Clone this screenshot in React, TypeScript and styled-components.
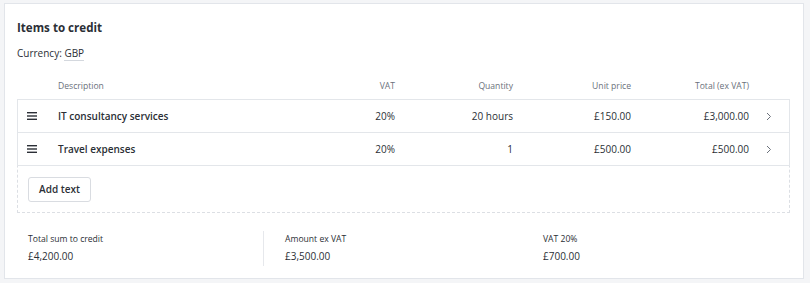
import React, { FC } from 'react';
import styled, { createGlobalStyle } from 'styled-components';

const GlobalStyle = createGlobalStyle`
    html, body {
        margin: 0;
        padding: 0;
        background: #f4f5f7;
        font-family: 'Open Sans', 'Liberation Sans', sans-serif;
        color: #2b2f36;
    }
`;

const Page = styled.div`
    padding: 3px 6px 5px 4px;
`;

const Card = styled.section`
    background: #ffffff;
    border: 1px solid #e2e5ea;
    padding: 14px 13px 12px 12px;
`;

const Title = styled.h2`
    margin: 0;
    font-size: 11.6px;
    font-weight: 700;
    line-height: 20px;
`;

const Currency = styled.div`
    margin-top: 7px;
    font-size: 10px;
    line-height: 16px;

    span {
        border-bottom: 1px solid #d4d8de;
    }
`;

const COLUMNS = '40px 219px 118px 118px 118px 118px 40px';

const HeaderRow = styled.div`
    margin-top: 11px;
    display: grid;
    grid-template-columns: ${COLUMNS};
    height: 27px;
    align-items: center;
    border-left: 1px solid transparent;
    border-right: 1px solid transparent;
    font-size: 8.6px;
    color: #6b717b;
`;

const Cell = styled.div<{ $right?: boolean }>`
    text-align: ${(p) => (p.$right ? 'right' : 'left')};
    white-space: nowrap;
`;

const LinesBox = styled.div`
    border: 1px dashed #dcdfe4;
    border-top: none;
`;

const Row = styled.div`
    display: grid;
    grid-template-columns: ${COLUMNS};
    align-items: center;
    height: 32px;
    margin: 0 -1px;
    border: 1px solid #e3e6ea;
    border-bottom: none;
    font-size: 10px;
    background: #fff;

    &:last-of-type {
        border-bottom: 1px solid #e3e6ea;
    }
`;

const Description = styled(Cell)`
    font-weight: 600;
`;

const Handle = styled.div`
    display: flex;
    align-items: center;
    padding-left: 9px;
`;

const Chevron = styled.div`
    display: flex;
    justify-content: center;
    align-items: center;
`;

const AddBar = styled.div`
    padding: 10px 10px 10px;
`;

const AddButton = styled.button`
    font-family: inherit;
    font-size: 10px;
    font-weight: 600;
    color: #2b2f36;
    background: #fff;
    border: 1px solid #d9dce1;
    border-radius: 3px;
    height: 25px;
    width: 63px;
    padding: 0;
`;

const Summary = styled.div`
    margin-top: 18px;
    display: grid;
    grid-template-columns: 247px 258px 1fr;
`;

const SummaryItem = styled.div<{ $divider?: boolean }>`
    padding-left: ${(p) => (p.$divider ? '11px' : '21px')};
    border-right: ${(p) => (p.$divider ? '1px solid #e6e8ec' : 'none')};
    height: 35px;
    display: flex;
    flex-direction: column;
    justify-content: center;
`;

const SummaryLabel = styled.div`
    font-size: 8.6px;
    line-height: 17px;
`;

const SummaryValue = styled.div`
    font-size: 10px;
    line-height: 17px;
`;

const HandleIcon: FC = () => (
    <svg width="10" height="8" viewBox="0 0 10 8">
        <rect x="0" y="0" width="10" height="1.4" fill="#2b2f36" />
        <rect x="0" y="3.3" width="10" height="1.4" fill="#2b2f36" />
        <rect x="0" y="6.6" width="10" height="1.4" fill="#2b2f36" />
    </svg>
);

const ChevronIcon: FC = () => (
    <svg width="6" height="9" viewBox="0 0 6 9">
        <path d="M1 1l3.5 3.5L1 8" fill="none" stroke="#6b717b" strokeWidth="1" />
    </svg>
);

const lines = [
    { description: 'IT consultancy services', vat: '20%', quantity: '20 hours', unit: '£150.00', total: '£3,000.00' },
    { description: 'Travel expenses', vat: '20%', quantity: '1', unit: '£500.00', total: '£500.00' },
];

const App: FC = () => (
    <>
        <GlobalStyle />
        <Page>
            <Card>
                <Title>Items to credit</Title>
                <Currency>
                    Currency: <span>GBP</span>
                </Currency>
                <HeaderRow>
                    <div />
                    <Cell>Description</Cell>
                    <Cell $right>VAT</Cell>
                    <Cell $right>Quantity</Cell>
                    <Cell $right>Unit price</Cell>
                    <Cell $right>Total (ex VAT)</Cell>
                    <div />
                </HeaderRow>
                <LinesBox>
                    <div>
                        {lines.map((line) => (
                            <Row key={line.description}>
                                <Handle>
                                    <HandleIcon />
                                </Handle>
                                <Description>{line.description}</Description>
                                <Cell $right>{line.vat}</Cell>
                                <Cell $right>{line.quantity}</Cell>
                                <Cell $right>{line.unit}</Cell>
                                <Cell $right>{line.total}</Cell>
                                <Chevron>
                                    <ChevronIcon />
                                </Chevron>
                            </Row>
                        ))}
                    </div>
                    <AddBar>
                        <AddButton>Add text</AddButton>
                    </AddBar>
                </LinesBox>
                <Summary>
                    <SummaryItem $divider>
                        <SummaryLabel>Total sum to credit</SummaryLabel>
                        <SummaryValue>£4,200.00</SummaryValue>
                    </SummaryItem>
                    <SummaryItem>
                        <SummaryLabel>Amount ex VAT</SummaryLabel>
                        <SummaryValue>£3,500.00</SummaryValue>
                    </SummaryItem>
                    <SummaryItem>
                        <SummaryLabel>VAT 20%</SummaryLabel>
                        <SummaryValue>£700.00</SummaryValue>
                    </SummaryItem>
                </Summary>
            </Card>
        </Page>
    </>
);

export default App;
